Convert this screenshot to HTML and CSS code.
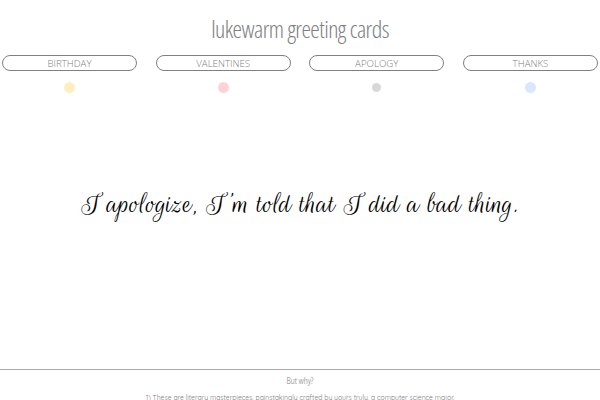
FILE: index.html
```html
<!DOCTYPE html>
<html lang="en">
<head>
    <meta charset="UTF-8">
    <meta name="viewport" content="width=device-width, initial-scale=1.0">
    <title>lukewarm greeting cards</title>
    <link rel="stylesheet" href="styles.css">
</head>
<body>
    <h1>lukewarm greeting cards</h1>
    <div class="menu">
        <div class="category">
            <button>BIRTHDAY</button>
            <div class="dot birthday"></div>
        </div>
        <div class="category">
            <button>VALENTINES</button>
            <div class="dot valentines"></div>
        </div>
        <div class="category">
            <button>APOLOGY</button>
            <div class="dot apology"></div>
        </div>
        <div class="category">
            <button>THANKS</button>
            <div class="dot thanks"></div>
        </div>
    </div>
    <div class="card">
        <p class="message">I apologize, I'm told that I did a bad thing.</p>
    </div>
    <div class="footer">
        <h2>But why?</h2>
        <p>1) These are literary masterpieces, painstakingly crafted by yours truly, a computer science major.</p>
    </div>
</body>
</html>
```

FILE: styles.css
```css
body {
    margin: 0;
    height: 400px;
    overflow: hidden;
    display: flex;
    flex-direction: column;
    background-color: white;
    color: gray;
    font-family: "Open Sans", sans-serif;
}
h1 {
    margin: 11px 0 9px;
    height: 35px;
    line-height: 35px;
    font-size: 24px;
    font-weight: 300;
    font-stretch: 75%;
    letter-spacing: -0.55px;
    text-align: center;
}
.menu {
    display: flex;
    justify-content: space-between;
    padding: 0 2px;
}
.category {
    width: 135px;
    display: flex;
    flex-direction: column;
    align-items: center;
}
.category button {
    width: 100%;
    height: 16px;
    padding: 1px 0 0;
    border: 1px solid gray;
    border-radius: 8px;
    background-color: white;
    color: gray;
    font-family: "Open Sans", sans-serif;
    font-size: 9.7px;
    font-weight: 350;
    line-height: 13px;
}
.dot {
    width: 11px;
    height: 11px;
    margin-top: 11px;
    border-radius: 50%;
}
.birthday {
    background-color: #ffefbf;
}
.valentines {
    background-color: #ffd3d3;
}
.apology {
    width: 9px;
    height: 9px;
    margin-top: 12px;
    background-color: #d8d8d8;
}
.thanks {
    background-color: #dbe7ff;
}
.card {
    flex: 1;
    padding-top: 94px;
    text-align: center;
}
.message {
    margin: 0;
    color: black;
    font-family: "Rouge Script", "Liberation Serif", cursive;
    font-size: 32px;
    letter-spacing: 0.15px;
    line-height: 34px;
    white-space: nowrap;
}
.footer {
    height: 30px;
    border-top: 1px solid #a9a9a9;
    text-align: center;
}
.footer h2 {
    margin: 5px 0;
    font-size: 9.6px;
    font-weight: 300;
    font-stretch: 75%;
    letter-spacing: -0.1px;
    line-height: 12px;
}
.footer p {
    margin: 0;
    font-family: Quicksand, "Open Sans", sans-serif;
    font-size: 6.83px;
    line-height: 12px;
    white-space: nowrap;
}
```
